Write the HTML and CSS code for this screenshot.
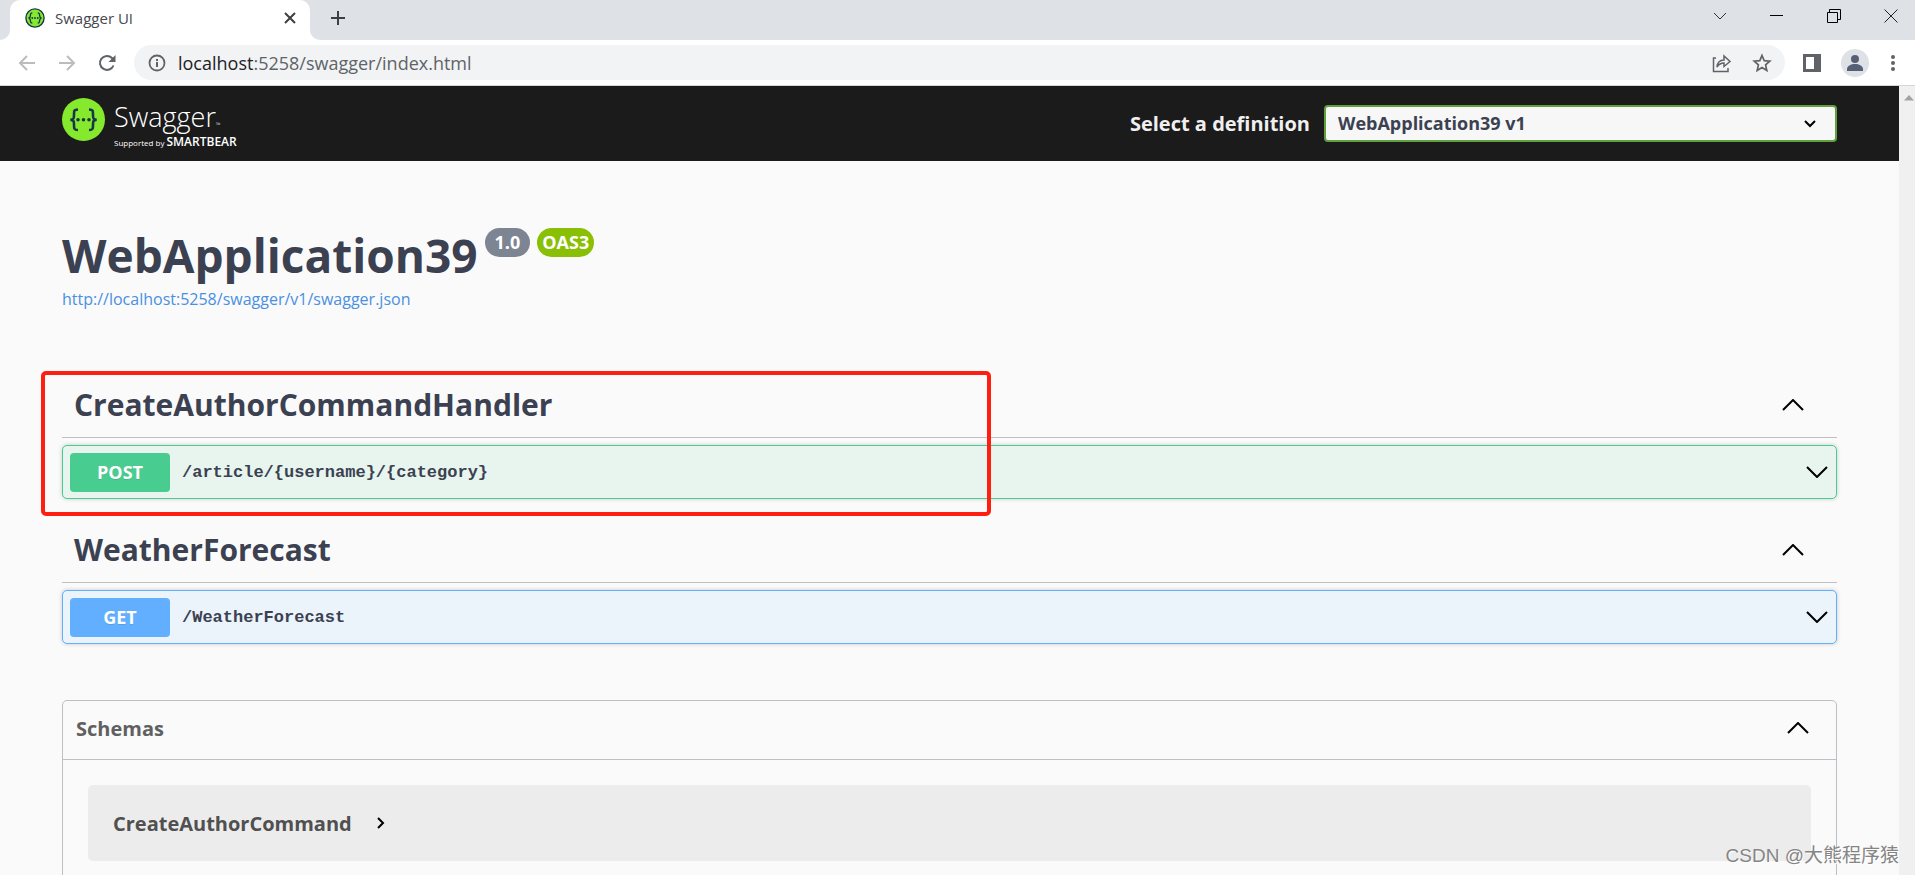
FILE: index.html
```html
<!DOCTYPE html>
<html lang="en">
<head>
    <meta charset="UTF-8">
    <meta name="viewport" content="width=device-width, initial-scale=1.0">
    <title>Swagger UI</title>
    <link rel="stylesheet" href="styles.css">
</head>
<body>
    <!-- Tab strip -->
    <div class="tab-strip">
        <div class="tab-edge"></div>
        <div class="tab">
            <svg class="favicon" width="20" height="20" viewBox="0 0 44 44">
                <circle cx="22" cy="22" r="20" fill="#85ea2d" stroke="#173647" stroke-width="3"/>
                <g fill="none" stroke="#173647" stroke-width="3">
                    <path d="M16 11c-4 0-4 1-4 5s0 5-4 6c4 1 4 2 4 6s0 5 4 5"/>
                    <path d="M28 11c4 0 4 1 4 5s0 5 4 6c-4 1-4 2-4 6s0 5-4 5"/>
                </g>
                <g fill="#173647"><circle cx="16" cy="22" r="2"/><circle cx="22" cy="22" r="2"/><circle cx="28" cy="22" r="2"/></g>
            </svg>
            <span class="tab-title">Swagger UI</span>
            <button class="icon-button" aria-label="Close tab">
                <svg width="12" height="12" viewBox="0 0 12 12"><path d="M1 1l10 10M11 1L1 11" stroke="#3c4043" stroke-width="2"/></svg>
            </button>
        </div>
        <div class="tab-rest">
            <button class="icon-button" aria-label="New tab">
                <svg width="16" height="16" viewBox="0 0 16 16"><path d="M8 1v14M1 8h14" stroke="#3c4043" stroke-width="2"/></svg>
            </button>
            <div class="window-buttons">
                <button class="icon-button" aria-label="Search tabs">
                    <svg width="14" height="14" viewBox="0 0 14 14"><path d="M1 4l6 6 6-6" fill="none" stroke="#333"/></svg>
                </button>
                <button class="icon-button" aria-label="Minimize">
                    <svg width="14" height="14" viewBox="0 0 14 14"><path d="M0 6.5h13" stroke="#000"/></svg>
                </button>
                <button class="icon-button" aria-label="Restore">
                    <svg width="14" height="14" viewBox="0 0 14 14"><path d="M.5 3.5h10v10H.5zM2.500 3V.5h11v10H11" fill="none" stroke="#000"/></svg>
                </button>
                <button class="icon-button" aria-label="Close">
                    <svg width="14" height="14" viewBox="0 0 14 14"><path d="M.5.5l13 13M13.500.5l-13 13" stroke="#222"/></svg>
                </button>
            </div>
        </div>
    </div>

    <!-- Address bar -->
    <div class="toolbar">
        <div class="nav-buttons">
            <button class="icon-button" aria-label="Back">
                <svg width="18" height="18" viewBox="0 0 18 18"><path d="M17 9H2M9 2L2 9l7 7" fill="none" stroke="#babcbe" stroke-width="2"/></svg>
            </button>
            <button class="icon-button" aria-label="Forward">
                <svg width="18" height="18" viewBox="0 0 18 18"><path d="M1 9h15M9 2l7 7-7 7" fill="none" stroke="#babcbe" stroke-width="2"/></svg>
            </button>
            <button class="icon-button" aria-label="Reload">
                <svg width="18" height="18" viewBox="0 0 18 18"><path d="M15.500 11.500A7 7 0 1 1 14 4l2 2" fill="none" stroke="#5f6368" stroke-width="2"/><path d="M17.500 1v7H10.500z" fill="#5f6368"/></svg>
            </button>
        </div>
        <div class="address">
            <svg width="18" height="18" viewBox="0 0 18 18"><circle cx="9" cy="9" r="7.500" fill="none" stroke="#5f6368" stroke-width="1.800"/><path d="M9 8v5M9 5v2" stroke="#5f6368" stroke-width="2"/></svg>
            <span class="url"><span class="url-host">localhost</span>:5258/swagger/index.html</span>
            <button class="icon-button" aria-label="Share">
                <svg width="20" height="20" viewBox="0 0 20 20"><path d="M4 5H1.500v13.500H16V15M5 14c.5-5 3.500-7 7-7V3l6 5.500-6 5v-3.500c-3 0-5 1-7 4z" fill="none" stroke="#5f6368" stroke-width="1.500"/></svg>
            </button>
            <button class="icon-button" aria-label="Bookmark">
                <svg width="20" height="20" viewBox="0 0 20 20"><path d="M10 2.500l2.200 5.200 5.600.5-4.200 3.700 1.200 5.500-4.800-2.900-4.800 2.900 1.200-5.500-4.200-3.700 5.600-.5z" fill="none" stroke="#5f6368" stroke-width="1.700"/></svg>
            </button>
        </div>
        <div class="toolbar-actions">
            <button class="icon-button" aria-label="Side panel">
                <svg width="18" height="18" viewBox="0 0 18 18"><path d="M1.500 1.500h15v15h-15z" fill="none" stroke="#5f6368" stroke-width="3"/><path d="M11 1h6v16h-6z" fill="#5f6368"/></svg>
            </button>
            <button class="icon-button" aria-label="Profile">
                <svg width="28" height="28" viewBox="0 0 28 28"><circle cx="14" cy="14" r="14" fill="#dee1e6"/><circle cx="14" cy="10" r="4" fill="#566075"/><path d="M6 22v-2c0-3 4-5 8-5s8 2 8 5v2z" fill="#566075"/></svg>
            </button>
            <button class="icon-button" aria-label="Menu">
                <svg width="8" height="18" viewBox="0 0 8 18"><g fill="#5f6368"><circle cx="4" cy="3" r="2"/><circle cx="4" cy="9" r="2"/><circle cx="4" cy="15" r="2"/></g></svg>
            </button>
        </div>
    </div>

    <div class="viewport">
        <div class="page">
            <header class="topbar">
                <a class="logo" href="#" aria-label="Swagger, supported by SmartBear">
                    <svg width="43" height="43" viewBox="0 0 43 43">
                        <circle cx="21.500" cy="21.500" r="21.500" fill="#85ea2d"/>
                        <g fill="none" stroke="#173647" stroke-width="2.600">
                            <path d="M16 11.500c-4 0-4 1-4 5s0 4.500-3.500 5.200c3.500.7 3.500 1.600 3.500 5.300s0 5 4 5"/>
                            <path d="M27 11.500c4 0 4 1 4 5s0 4.500 3.500 5.200c-3.500.7-3.500 1.600-3.500 5.300s0 5-4 5"/>
                        </g>
                        <g fill="#173647"><circle cx="16" cy="21.700" r="1.800"/><circle cx="21.500" cy="21.700" r="1.800"/><circle cx="27" cy="21.700" r="1.800"/></g>
                    </svg>
                    <span class="logo-text">
                        <span class="logo-name">Swagger<small>™</small></span>
                        <span class="logo-sub">Supported by <b>SMARTBEAR</b></span>
                    </span>
                </a>
                <div class="definition">
                    <label for="definition">Select a definition</label>
                    <div class="select-box">
                        <select id="definition">
                            <option>WebApplication39 v1</option>
                        </select>
                        <svg class="select-arrow" width="12" height="8" viewBox="0 0 12 8"><path d="M1 1l5 5 5-5" fill="none" stroke="#000" stroke-width="2"/></svg>
                    </div>
                </div>
            </header>

            <main class="wrapper">
                <section class="info">
                    <div class="title-row">
                        <h1>WebApplication39</h1>
                        <span class="badge">1.0</span>
                        <span class="badge badge-oas">OAS3</span>
                    </div>
                    <a class="spec-link" href="#">http://localhost:5258/swagger/v1/swagger.json</a>
                </section>

                <section class="tag">
                    <div class="highlight"></div>
                    <div class="tag-header">
                        <h2>CreateAuthorCommandHandler</h2>
                        <button class="icon-button" aria-label="Collapse">
                            <svg width="22" height="12" viewBox="0 0 22 12"><path d="M1 11L11 1l10 10" fill="none" stroke="#000" stroke-width="2"/></svg>
                        </button>
                    </div>
                    <div class="opblock opblock-post">
                        <button class="method">POST</button>
                        <span class="path">/article/{username}/{category}</span>
                        <button class="icon-button" aria-label="Expand">
                            <svg width="22" height="12" viewBox="0 0 22 12"><path d="M1 1l10 10L21 1" fill="none" stroke="#000" stroke-width="2"/></svg>
                        </button>
                    </div>
                </section>

                <section class="tag">
                    <div class="tag-header">
                        <h2>WeatherForecast</h2>
                        <button class="icon-button" aria-label="Collapse">
                            <svg width="22" height="12" viewBox="0 0 22 12"><path d="M1 11L11 1l10 10" fill="none" stroke="#000" stroke-width="2"/></svg>
                        </button>
                    </div>
                    <div class="opblock opblock-get">
                        <button class="method">GET</button>
                        <span class="path">/WeatherForecast</span>
                        <button class="icon-button" aria-label="Expand">
                            <svg width="22" height="12" viewBox="0 0 22 12"><path d="M1 1l10 10L21 1" fill="none" stroke="#000" stroke-width="2"/></svg>
                        </button>
                    </div>
                </section>

                <section class="models">
                    <div class="models-header">
                        <h3>Schemas</h3>
                        <button class="icon-button" aria-label="Collapse">
                            <svg width="22" height="12" viewBox="0 0 22 12"><path d="M1 11L11 1l10 10" fill="none" stroke="#000" stroke-width="2"/></svg>
                        </button>
                    </div>
                    <div class="model">
                        <span>CreateAuthorCommand</span>
                        <button class="icon-button" aria-label="Expand">
                            <svg width="10" height="14" viewBox="0 0 10 14"><path d="M2 2l5 5-5 5" fill="none" stroke="#000" stroke-width="2"/></svg>
                        </button>
                    </div>
                </section>
            </main>
        </div>
        <div class="scrollbar">
            <svg width="10" height="6" viewBox="0 0 10 6"><path d="M0 5.500L5 0l5 5.500z" fill="#a3a3a3"/></svg>
        </div>
        <div class="watermark">CSDN @大熊程序猿</div>
    </div>
</body>
</html>
```

FILE: styles.css
```css
* {
    box-sizing: border-box;
}

body {
    margin: 0;
    height: 100vh;
    display: flex;
    flex-direction: column;
    overflow: hidden;
    background: #fafafa;
    color: #3b4151;
    font-family: "Open Sans", "Noto Sans", sans-serif;
}

h1, h2, h3 {
    margin: 0;
}

svg {
    display: block;
    flex: none;
}

.icon-button {
    padding: 0;
    border: 0;
    background: none;
    cursor: pointer;
}

/* Browser tabs */
.tab-strip {
    display: flex;
    height: 40px;
    flex: none;
    background: linear-gradient(#dee1e6 20px, #fff 20px);
}

.tab-edge {
    width: 10px;
    background: #dee1e6;
    border-bottom-right-radius: 10px;
}

.tab {
    display: flex;
    align-items: center;
    width: 300px;
    padding: 0 14px 4px 15px;
    gap: 10px;
    background: #fff;
    border-radius: 10px 10px 0 0;
}

.tab-title {
    flex: 1;
    font-size: 15px;
    color: #45494d;
}

.tab-rest {
    flex: 1;
    display: flex;
    justify-content: space-between;
    align-items: center;
    padding: 0 17px 4px 20px;
    background: #dee1e6;
    border-bottom-left-radius: 10px;
}

.window-buttons {
    display: flex;
    gap: 43px;
    padding-bottom: 5px;
}

/* Toolbar */
.toolbar {
    display: flex;
    align-items: center;
    height: 46px;
    flex: none;
    background: #fff;
    border-bottom: 1px solid #d5d8d8;
}

.nav-buttons {
    display: flex;
    gap: 22px;
    padding: 0 18px;
}

.address {
    flex: 1;
    display: flex;
    align-items: center;
    gap: 20px;
    height: 35px;
    padding: 0 13px 0 14px;
    background: #f1f3f4;
    border-radius: 18px;
}

.url {
    flex: 1;
    margin-left: -8px;
    font-size: 18px;
    color: #5f6368;
}

.url-host {
    color: #202124;
}

.toolbar-actions {
    display: flex;
    align-items: center;
    gap: 20px;
    padding: 0 18px;
}

/* Page */
.viewport {
    position: relative;
    display: flex;
    flex: 1;
    min-height: 0;
    overflow: hidden;
}

.page {
    flex: 1;
}

.scrollbar {
    width: 16px;
    padding: 9px 0 0 5px;
    background: #f0f0f0;
}

.topbar {
    display: flex;
    justify-content: space-between;
    align-items: center;
    height: 75px;
    padding: 0 62px;
    background: #1b1b1b;
}

.logo {
    display: flex;
    gap: 9px;
    color: #fff;
    text-decoration: none;
}

.logo-text {
    display: flex;
    flex-direction: column;
}

.logo-name {
    font-size: 27px;
    font-weight: 300;
    line-height: 38px;
}

.logo-name small {
    font-size: 6px;
    line-height: 1;
}

.logo-sub {
    font-size: 8px;
    line-height: 12px;
}

.logo-sub b {
    font-size: 12px;
    font-weight: 600;
    line-height: 1;
}

.definition {
    display: flex;
    align-items: center;
    gap: 14px;
}

.definition label {
    color: #f0f0f0;
    font-size: 20px;
    font-weight: 700;
}

.select-box {
    position: relative;
    width: 27vw;
    max-width: 513px;
}

.definition select {
    display: block;
    width: 100%;
    height: 37px;
    padding: 0 40px 2px 12px;
    appearance: none;
    border: 2px solid #62a03f;
    border-radius: 4px;
    background: #f7f7f7;
    color: #3b4151;
    font-family: inherit;
    font-size: 18px;
    font-weight: 700;
}

.select-arrow {
    position: absolute;
    right: 21px;
    top: 15px;
    pointer-events: none;
}

.wrapper {
    padding: 62px 62px 0;
}

.info {
    height: 150px;
}

.title-row {
    display: flex;
    align-items: flex-start;
    gap: 7px;
}

.title-row h1 {
    font-size: 46px;
    line-height: 64px;
}

.badge {
    margin-top: 5px;
    padding: 0 10px;
    border-radius: 15px;
    background: #7d8492;
    color: #fff;
    font-size: 18px;
    font-weight: 700;
    line-height: 29px;
}

.badge-oas {
    padding: 0 5px;
    background: #89bf04;
}

.spec-link {
    display: block;
    font-size: 16px;
    line-height: 24px;
    color: #4990e2;
    text-decoration: none;
}

.tag {
    position: relative;
    margin-bottom: 19px;
}

.tag-header {
    display: flex;
    justify-content: space-between;
    align-items: center;
    height: 65px;
    padding: 0 33px 0 12px;
    border-bottom: 1px solid #bfc0c3;
}

.tag-header h2 {
    font-size: 30px;
    line-height: 40px;
}

.opblock {
    display: flex;
    align-items: center;
    height: 54px;
    margin-top: 7px;
    padding: 0 8px 0 7px;
    border: 1px solid;
    border-radius: 5px;
    box-shadow: 0 0 4px rgba(0, 0, 0, 0.2);
}

.opblock-post {
    border-color: #49cc90;
    background: #e7f5ee;
}

.opblock-get {
    border-color: #61affe;
    background: #ebf3fb;
}

.method {
    width: 100px;
    height: 39px;
    border: 0;
    border-radius: 4px;
    color: #fff;
    font-family: inherit;
    font-size: 18px;
    font-weight: 700;
    text-shadow: 0 1px 0 rgba(0, 0, 0, 0.1);
}

.opblock-post .method {
    background: #49cc90;
}

.opblock-get .method {
    background: #61affe;
}

.path {
    flex: 1;
    padding-left: 12px;
    font-family: "Liberation Mono", monospace;
    font-size: 17px;
    font-weight: 700;
}

/* Red frame around the first tag */
.highlight {
    position: absolute;
    top: -2px;
    left: -21px;
    width: 950px;
    height: 145px;
    border: 4px solid #ff1f10;
    border-radius: 5px;
}

.models {
    margin-top: 56px;
    height: 240px;
    border: 1px solid #bdbec6;
    border-radius: 5px;
}

.models-header {
    display: flex;
    justify-content: space-between;
    align-items: center;
    height: 59px;
    padding: 0 27px 4px 13px;
    border-bottom: 1px solid #bdbec6;
}

.models-header h3 {
    color: #606060;
    font-size: 20px;
}

.model {
    display: flex;
    align-items: center;
    gap: 24px;
    height: 76px;
    margin: 25px;
    padding: 0 25px;
    border-radius: 5px;
    background: #ececec;
    color: #505050;
    font-size: 20px;
    font-weight: 700;
}

.watermark {
    position: absolute;
    right: 16px;
    bottom: 8px;
    color: #858585;
    font-family: "Liberation Sans", "Noto Sans CJK SC", sans-serif;
    font-size: 19px;
    text-shadow: 1px 1px 0 #fff;
}
```
